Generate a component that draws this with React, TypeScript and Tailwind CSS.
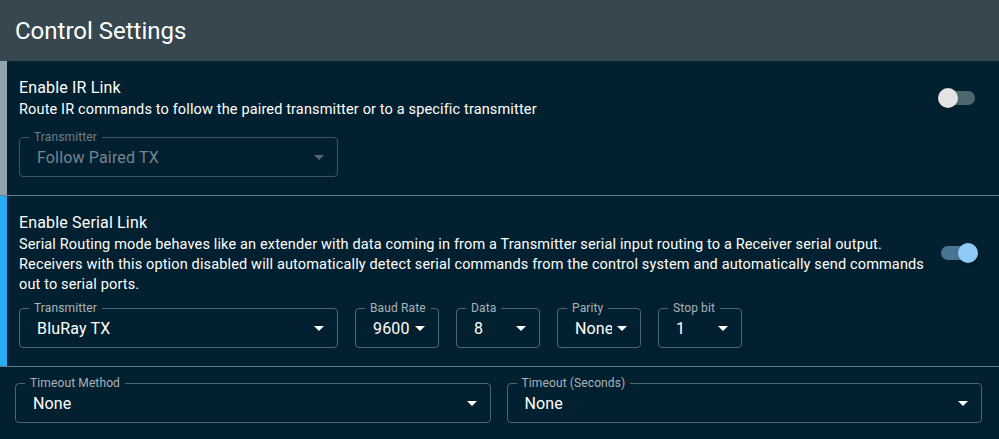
import React from 'react'

type SelectProps = {
  label: string
  value: string
  className: string
  disabled?: boolean
}

function Arrow({ disabled }: { disabled?: boolean }) {
  return (
    <svg viewBox="0 0 24 24" className="absolute right-[6px] top-1/2 -translate-y-1/2 w-6 h-6">
      <path d="M7 10l5 5 5-5z" fill={disabled ? '#55666f' : '#ffffff'} />
    </svg>
  )
}

function Select({ label, value, className, disabled }: SelectProps) {
  return (
    <div
      className={`relative h-[40px] rounded-[4px] border flex items-center ${
        disabled ? 'border-[#3f5560]' : 'border-[#4f6671]'
      } ${className}`}
    >
      <span
        className={`absolute -top-[9px] left-[9px] px-[5px] bg-[#02202f] text-[12px] leading-[16px] tracking-[0.01em] ${
          disabled ? 'text-[#6f8089]' : 'text-[#a9b4ba]'
        }`}
      >
        {label}
      </span>
      <div className="w-full min-w-0 pl-[17px] pr-[28px]">
        <span
          className={`block overflow-hidden whitespace-nowrap text-[16px] leading-[23px] tracking-[0.01em] ${
            disabled ? 'text-[#76868f]' : 'text-white'
          }`}
        >
          {value}
        </span>
      </div>
      <Arrow disabled={disabled} />
    </div>
  )
}

function Toggle({ on }: { on: boolean }) {
  return (
    <div className="relative w-[58px] h-[38px] shrink-0">
      <div
        className={`absolute left-[12px] top-[12px] w-[34px] h-[14px] rounded-full ${
          on ? 'bg-[#497594]' : 'bg-[#4e6670]'
        }`}
      />
      <div
        className={`absolute top-[9px] w-[20px] h-[20px] rounded-full shadow-md ${
          on ? 'left-[29px] bg-[#90caf9]' : 'left-[9px] bg-[#e3e3e3]'
        }`}
      />
    </div>
  )
}

export default function App() {
  return (
    <div className="min-h-screen bg-[#02202f] text-white" style={{ fontFamily: 'Roboto, "Liberation Sans", sans-serif' }}>
      {/* Header */}
      <div className="h-[61px] bg-[#37474f] flex items-center px-[15px]">
        <h1 className="text-[24px] leading-[32px] font-normal">Control Settings</h1>
      </div>

      {/* IR link */}
      <div className="flex border-b border-[#5f7e8d]">
        <div className="w-[7px] shrink-0 bg-[#92a5ae]" />
        <div className="flex-1 pl-[12px] pr-[12px] pt-[15px] pb-[18px]">
          <div className="flex items-center">
            <div className="flex-1 min-w-0">
              <p className="text-[16px] leading-[24px] tracking-[0.01em]">Enable IR Link</p>
              <p className="text-[14.5px] leading-[20px] tracking-[0.01em]">
                Route IR commands to follow the paired transmitter or to a specific transmitter
              </p>
            </div>
            <Toggle on={false} />
          </div>
          <div className="mt-[17px] flex">
            <Select label="Transmitter" value="Follow Paired TX" className="w-[319px]" disabled />
          </div>
        </div>
      </div>

      {/* Serial link */}
      <div className="flex border-b border-[#5f7e8d]">
        <div className="w-[7px] shrink-0 bg-[#29abf3]" />
        <div className="flex-1 pl-[12px] pr-[12px] pt-[15px] pb-[18px]">
          <div className="flex items-center">
            <div className="flex-1 min-w-0">
              <p className="text-[16px] leading-[24px] tracking-[0.01em]">Enable Serial Link</p>
              <p className="text-[14.5px] leading-[20px] tracking-[0.01em]">
                Serial Routing mode behaves like an extender with data coming in from a Transmitter serial input routing
                to a Receiver serial output. Receivers with this option disabled will automatically detect serial
                commands from the control system and automatically send commands out to serial ports.
              </p>
            </div>
            <Toggle on={true} />
          </div>
          <div className="mt-[13px] flex gap-[17px]">
            <Select label="Transmitter" value="BluRay TX" className="w-[319px]" />
            <Select label="Baud Rate" value="9600" className="w-[84px]" />
            <Select label="Data" value="8" className="w-[84px]" />
            <Select label="Parity" value="None" className="w-[84px]" />
            <Select label="Stop bit" value="1" className="w-[84px]" />
          </div>
        </div>
      </div>

      {/* Timeout */}
      <div className="grid grid-cols-2 gap-[16px] pl-[15px] pr-[17px] pt-[16px] pb-[16px]">
        <Select label="Timeout Method" value="None" className="w-full" />
        <Select label="Timeout (Seconds)" value="None" className="w-full" />
      </div>
    </div>
  )
}
